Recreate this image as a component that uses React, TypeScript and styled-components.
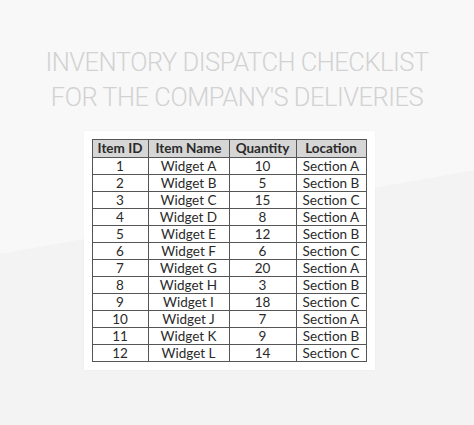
import React from "react";
import styled, { createGlobalStyle } from "styled-components";

const GlobalStyle = createGlobalStyle`
  html, body {
    margin: 0;
    padding: 0;
  }
  body {
    font-family: "Lato", "Noto Sans", sans-serif;
  }
`;

const rows = [
  [1, "Widget A", 10, "Section A"],
  [2, "Widget B", 5, "Section B"],
  [3, "Widget C", 15, "Section C"],
  [4, "Widget D", 8, "Section A"],
  [5, "Widget E", 12, "Section B"],
  [6, "Widget F", 6, "Section C"],
  [7, "Widget G", 20, "Section A"],
  [8, "Widget H", 3, "Section B"],
  [9, "Widget I", 18, "Section C"],
  [10, "Widget J", 7, "Section A"],
  [11, "Widget K", 9, "Section B"],
  [12, "Widget L", 14, "Section C"],
];

const App = () => {
  return (
    <Page>
      <GlobalStyle />
      <Title>
        INVENTORY DISPATCH CHECKLIST
        <br />
        FOR THE COMPANY'S DELIVERIES
      </Title>
      <Card>
        <Table>
          <colgroup>
            <col style={{ width: 56 }} />
            <col style={{ width: 81 }} />
            <col style={{ width: 67 }} />
            <col style={{ width: 70 }} />
          </colgroup>
          <thead>
            <tr>
              <Head>Item ID</Head>
              <Head>Item Name</Head>
              <Head>Quantity</Head>
              <Head>Location</Head>
            </tr>
          </thead>
          <tbody>
            {rows.map((r) => (
              <tr key={r[0]}>
                {r.map((c, i) => (
                  <Cell key={i}>{c}</Cell>
                ))}
              </tr>
            ))}
          </tbody>
        </Table>
      </Card>
    </Page>
  );
};

const Page = styled.div`
  width: 474px;
  height: 425px;
  box-sizing: border-box;
  padding-top: 45px;
  display: flex;
  flex-direction: column;
  align-items: center;
  background: linear-gradient(
    -10deg,
    #f3f3f3 0%,
    #f3f3f3 50%,
    #f8f8f8 50.2%,
    #f8f8f8 100%
  );
  overflow: hidden;
`;

const Title = styled.h1`
  margin: 0;
  font-family: "Roboto", sans-serif;
  font-weight: 300;
  font-size: 25.5px;
  line-height: 35px;
  color: #d2d2d2;
  text-align: center;
  letter-spacing: -0.5px;
`;

const Card = styled.div`
  margin-top: 16px;
  margin-left: -16px;
  padding: 8px;
  background: #ffffff;
  box-shadow: 0 0 2px rgba(0, 0, 0, 0.04);
`;

const Table = styled.table`
  border-collapse: collapse;
  table-layout: fixed;
  width: 274px;
  border: 1px solid #555;
  font-family: "Lato", "Noto Sans", sans-serif;
  font-size: 13.5px;
  color: #2a2a2a;
`;

const Head = styled.th`
  height: 17px;
  padding: 0;
  background: #d6d6d6;
  border: 1px solid #555;
  font-weight: 700;
  text-align: center;
  line-height: 17px;
`;

const Cell = styled.td`
  height: 16px;
  padding: 0;
  border: 1px solid #555;
  text-align: center;
  line-height: 16px;
`;

export default App;
